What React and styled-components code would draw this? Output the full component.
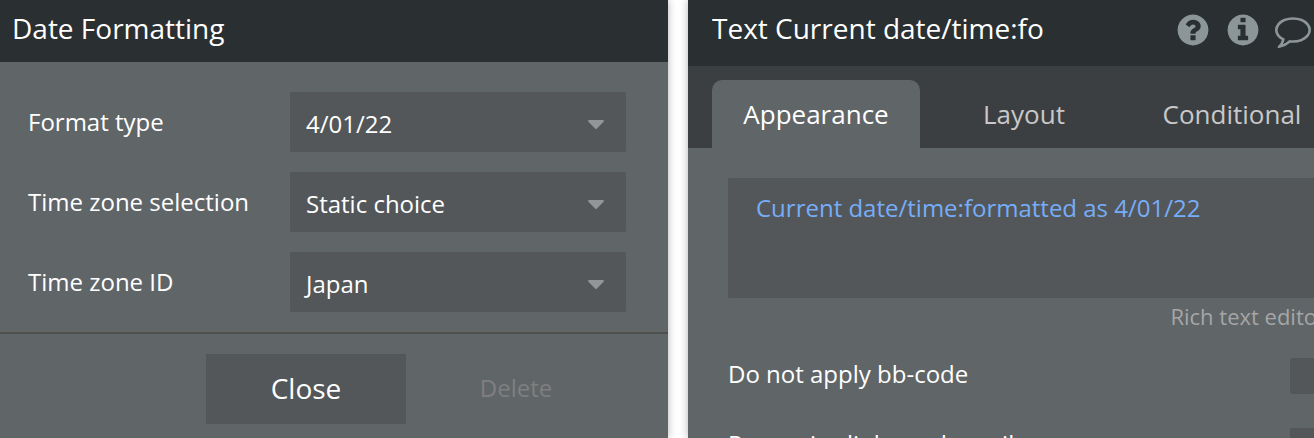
import React, { useState } from "react";
import styled, { createGlobalStyle } from "styled-components";

const zones = ["Japan", "UTC", "US/Pacific"];
const tabs = ["Appearance", "Layout", "Conditional"];

export default function App() {
  const [activeTab, setActiveTab] = useState("Appearance");

  return (
    <Page>
      <GlobalStyle />
      <Panel>
        <Header $height="62px" $indent="12px">
          <Title>Date Formatting</Title>
        </Header>
        <Fields>
          <SelectField id="format" label="Format type" options={["4/01/22", "Apr 1, 2022"]} />
          <SelectField id="selection" label="Time zone selection" options={["Static choice", "Dynamic value"]} />
          <SelectField id="zone" label="Time zone ID" options={zones} />
        </Fields>
        <Footer>
          <CloseButton type="button">Close</CloseButton>
          <DeleteButton type="button" disabled>
            Delete
          </DeleteButton>
        </Footer>
      </Panel>

      <Panel>
        <Header $height="66px" $indent="24px">
          <Title>Text Current date/time:fo</Title>
          <Actions>
            <IconButton type="button" aria-label="Help">
              <svg viewBox="0 0 1792 1792">
                <path d="M1024 1376v-192q0-14-9-23t-23-9h-192q-14 0-23 9t-9 23v192q0 14 9 23t23 9h192q14 0 23-9t9-23zm256-672q0-88-55.500-163t-138.500-116-170-41q-243 0-371 213-15 24 8 42l132 100q7 6 19 6 16 0 25-12 53-68 86-92 34-24 86-24 48 0 85.500 26t37.500 59q0 38-20 61t-68 45q-63 28-115.500 86.500t-52.500 125.500v36q0 14 9 23t23 9h192q14 0 23-9t9-23q0-19 21.500-49.500t54.500-49.500q32-18 49-28.500t46-35 44.500-48 28-60.500 12.500-81zm384 192q0 209-103 385.500t-279.500 279.500-385.500 103-385.500-103-279.500-279.500-103-385.500 103-385.500 279.500-279.500 385.500-103 385.500 103 279.500 279.500 103 385.500z" />
              </svg>
            </IconButton>
            <IconButton type="button" aria-label="Info">
              <svg viewBox="0 0 1792 1792">
                <path d="M1152 1376v-160q0-14-9-23t-23-9h-96v-512q0-14-9-23t-23-9h-320q-14 0-23 9t-9 23v160q0 14 9 23t23 9h96v320h-96q-14 0-23 9t-9 23v160q0 14 9 23t23 9h448q14 0 23-9t9-23zm-128-896v-160q0-14-9-23t-23-9h-192q-14 0-23 9t-9 23v160q0 14 9 23t23 9h192q14 0 23-9t9-23zm640 416q0 209-103 385.500t-279.500 279.500-385.500 103-385.500-103-279.500-279.500-103-385.500 103-385.500 279.500-279.500 385.500-103 385.500 103 279.500 279.500 103 385.500z" />
              </svg>
            </IconButton>
            <IconButton type="button" aria-label="Comments">
              <svg viewBox="0 0 1792 1792">
                <path d="M896 384q-204 0-381.500 69.500t-282 187.500-104.500 255q0 112 71.500 213.500t201.500 175.500l87 50-27 96q-24 91-70 172 152-63 275-171l43-38 57 6q69 8 130 8 204 0 381.500-69.500t282-187.500 104.500-255-104.500-255-282-187.500-381.500-69.500zm896 512q0 174-120 321.500t-326 233-450 85.500q-70 0-145-8-198 175-460 242-49 14-114 22h-5q-15 0-27-10.500t-16-27.500v-1q-3-4-.5-12t2-10 4.500-9.500l6-9 7-8.500 8-9q7-8 31-34.500t34.500-38 31-39.500 32.500-51 27-59 26-76q-157-89-247.500-220t-90.500-281q0-174 120-321.500t326-233 450-85.500 450 85.500 326 233 120 321.500z" />
              </svg>
            </IconButton>
          </Actions>
        </Header>
        <TabBar role="tablist">
          {tabs.map((tab) => (
            <Tab
              key={tab}
              type="button"
              role="tab"
              aria-selected={tab === activeTab}
              $active={tab === activeTab}
              onClick={() => setActiveTab(tab)}
            >
              {tab}
            </Tab>
          ))}
        </TabBar>
        <Body>
          <Expression aria-label="Text" spellCheck={false} defaultValue="Current date/time:formatted as 4/01/22" />
          <EditorLink href="#editor">Rich text editor</EditorLink>
          <CheckRow>
            <label htmlFor="bbcode">Do not apply bb-code</label>
            <Checkbox id="bbcode" />
          </CheckRow>
          <CheckRow>
            <label htmlFor="links">Recognize links and emails</label>
            <Checkbox id="links" />
          </CheckRow>
        </Body>
      </Panel>
    </Page>
  );
}

function SelectField({ id, label, options }) {
  return (
    <Field>
      <label htmlFor={id}>{label}</label>
      <SelectWrap>
        <Select id={id}>
          {options.map((option) => (
            <option key={option}>{option}</option>
          ))}
        </Select>
        <Arrow viewBox="0 0 16 10" aria-hidden="true">
          <path d="M1 0h14q1.500 .5 .5 1.700L9 8.500q-1 1-2 0L.5 1.700Q-.5 .5 1 0z" />
        </Arrow>
      </SelectWrap>
    </Field>
  );
}

const GlobalStyle = createGlobalStyle`
  * {
    box-sizing: border-box;
  }
  body {
    margin: 0;
    background: #fff;
    color: #fff;
    font-family: "Open Sans", sans-serif;
    font-size: 24px;
    line-height: 32px;
  }
  button, select, textarea, input {
    margin: 0;
    border: none;
    font: inherit;
    color: inherit;
  }
`;

const Page = styled.div`
  display: grid;
  grid-template-columns: 668fr 626fr;
  gap: 20px;
  height: 100vh;
  overflow: hidden;
`;

const Panel = styled.section`
  min-width: 0;
  overflow: hidden;
  background: #606568;
  box-shadow: 0 0 8px rgba(0, 0, 0, 0.3);
`;

const Header = styled.header`
  display: flex;
  height: ${(props) => props.$height};
  padding-left: ${(props) => props.$indent};
  background: #2a2f32;
`;

const Title = styled.h2`
  flex: 1;
  min-width: 0;
  margin: 0;
  overflow: hidden;
  white-space: nowrap;
  font-size: 28px;
  font-weight: 400;
  line-height: 56px;
`;

const Actions = styled.div`
  display: flex;
  gap: 14px;
  padding: 12px 3px 0 0;
`;

const IconButton = styled.button`
  width: 36px;
  height: 36px;
  padding: 0;
  background: none;
  cursor: pointer;
  svg {
    display: block;
    fill: #8c9698;
  }
`;

const Fields = styled.div`
  display: grid;
  gap: 20px;
  padding: 30px 42px 20px 28px;
`;

const Field = styled.div`
  display: grid;
  grid-template-columns: 262px 1fr;
  align-items: center;
`;

const SelectWrap = styled.div`
  position: relative;
`;

const Select = styled.select`
  display: block;
  appearance: none;
  width: 100%;
  height: 60px;
  padding: 4px 48px 0 12px;
  border-radius: 2px;
  background: #535759;
  text-indent: 4px;
`;

const Arrow = styled.svg`
  position: absolute;
  top: 28px;
  right: 22px;
  width: 16px;
  height: 10px;
  fill: #929698;
  pointer-events: none;
`;

const Footer = styled.footer`
  display: flex;
  justify-content: flex-end;
  gap: 10px;
  padding: 20px 52px 14px;
  border-top: 2px solid #4f4f4e;
`;

const FooterButton = styled.button`
  width: 200px;
  height: 70px;
  padding: 0 0 2px;
`;

const CloseButton = styled(FooterButton)`
  background: #535759;
  font-size: 28px;
  cursor: pointer;
`;

const DeleteButton = styled(FooterButton)`
  background: none;
  color: #7f7f7f;
`;

const TabBar = styled.div`
  display: flex;
  padding: 14px 0 0 24px;
  background: #3c3f42;
`;

const Tab = styled.button`
  flex: 0 0 208px;
  height: 68px;
  border-radius: 10px 10px 0 0;
  background: ${(props) => (props.$active ? "#606568" : "none")};
  color: ${(props) => (props.$active ? "#fff" : "#c8c8c8")};
  font-size: 26px;
  cursor: pointer;
`;

// the editor is wider than the part of the panel that shows
const Body = styled.div`
  display: flex;
  flex-direction: column;
  width: calc(100% + 52px);
  padding: 30px 40px;
`;

const Expression = styled.textarea`
  height: 120px;
  padding: 14px 28px;
  border-radius: 2px;
  background: #535759;
  color: #77adf8;
  resize: none;
`;

const EditorLink = styled.a`
  align-self: flex-end;
  margin-bottom: 24px;
  color: #a6a6a6;
  font-size: 22px;
  line-height: 36px;
  text-decoration: none;
`;

const CheckRow = styled.div`
  display: flex;
  justify-content: space-between;
  align-items: flex-start;
  margin-bottom: 34px;
`;

const Checkbox = styled.input.attrs({ type: "checkbox" })`
  appearance: none;
  width: 36px;
  height: 36px;
  border-radius: 2px;
  background: #535759;
`;
